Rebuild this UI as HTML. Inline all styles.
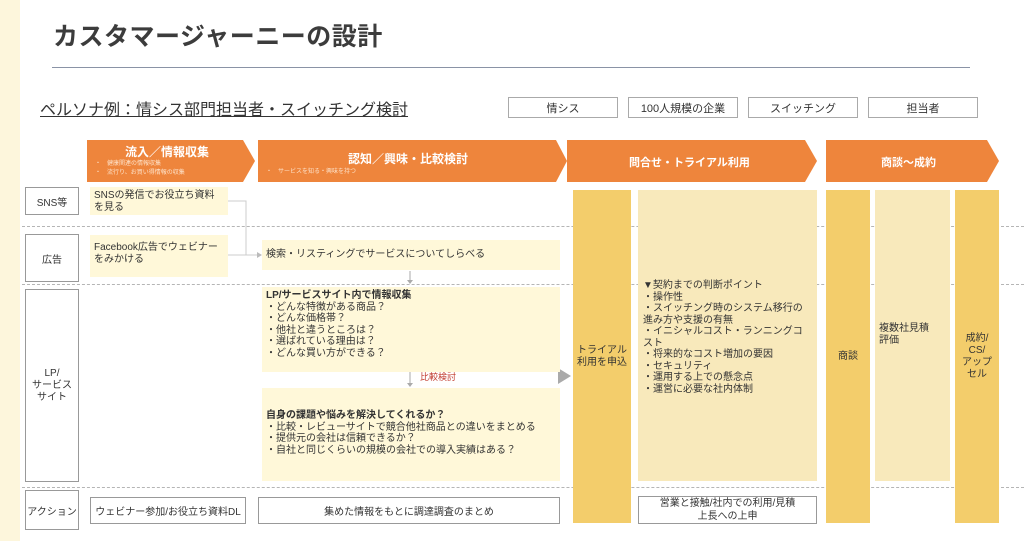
<!DOCTYPE html>
<html><head><meta charset="utf-8"><style>
*{margin:0;padding:0;box-sizing:border-box}
body{width:1024px;height:541px;background:#fff;position:relative;overflow:hidden;font-family:"Liberation Sans","Noto Sans CJK JP",sans-serif;color:#333}
.a{position:absolute}
.strip{left:0;top:0;width:20px;height:541px;background:#fdf6dc}
.title{left:53px;top:17px;font-size:25px;font-weight:600;color:#3c3c3c;letter-spacing:0.5px}
.hr{left:52px;top:67px;width:918px;height:1px;background:#8a93a6}
.persona{left:40px;top:96px;font-size:16px;text-decoration:underline;color:#333}
.tag{top:97px;width:110px;height:21px;border:1px solid #aaa;font-size:11px;display:flex;align-items:center;justify-content:center;color:#333}
.lbl{border:1px solid #999;font-size:10px;text-align:center;display:flex;align-items:center;justify-content:center;background:#fff}
.card{background:#fff8d9;font-size:10px;line-height:12px;padding:3px 4px}
.dash{left:22px;width:1002px;height:0;border-top:1px dashed #b5b5b5}
.col{background:#f3cd6b;font-size:10px;display:flex;align-items:center;justify-content:center;text-align:center;line-height:12px}
.lcol{background:#f8e9bb;font-size:10px;line-height:11.5px}
.box{border:1px solid #999;background:#fff;font-size:10px;display:flex;align-items:center;justify-content:center;text-align:center}
</style></head><body>
<div class="a strip"></div>
<div class="a title">カスタマージャーニーの設計</div>
<div class="a hr"></div>
<div class="a persona">ペルソナ例：情シス部門担当者・スイッチング検討</div>
<div class="a tag" style="left:508px">情シス</div>
<div class="a tag" style="left:628px">100人規模の企業</div>
<div class="a tag" style="left:748px">スイッチング</div>
<div class="a tag" style="left:868px">担当者</div>

<svg class="a" style="left:0;top:0" width="1024" height="541">
<polygon points="87,140 243,140 255,161 243,182 87,182" fill="#ee853c"/>
<polygon points="258,140 556,140 567,161 556,182 258,182" fill="#ee853c"/>
<polygon points="567,140 805,140 817,161 805,182 567,182" fill="#ee853c"/>
<polygon points="826,140 987,140 999,161 987,182 826,182" fill="#ee853c"/>
<polyline points="228,201 246,201 246,255" fill="none" stroke="#ccc"/>
<line x1="228" y1="255" x2="258" y2="255" stroke="#ccc"/>
<polygon points="257,252 262,255 257,258" fill="#bbb"/>
<line x1="410" y1="271" x2="410" y2="281" stroke="#aaa"/>
<polygon points="407,280 413,280 410,284" fill="#aaa"/>
<line x1="410" y1="367" x2="410" y2="384" stroke="#aaa"/>
<polygon points="407,368 413,368 410,364" fill="#aaa"/>
<polygon points="407,383 413,383 410,387" fill="#aaa"/>
<polygon points="558,368 571,376 558,384" fill="#aaa"/>
</svg>
<div class="a" style="left:87px;top:143px;width:160px;text-align:center;color:#fff;font-size:12px;font-weight:bold">流入／情報収集</div>
<div class="a" style="left:95px;top:160px;color:#fde1c8;font-size:6px;line-height:9px">・　健康関連の情報収集<br>・　流行り、お買い得情報の収集</div>
<div class="a" style="left:258px;top:150px;width:300px;text-align:center;color:#fff;font-size:12px;font-weight:bold">認知／興味・比較検討</div>
<div class="a" style="left:266px;top:166px;color:#fde1c8;font-size:6px">・　サービスを知る・興味を持つ</div>
<div class="a" style="left:567px;top:154px;width:245px;text-align:center;color:#fff;font-size:11px;font-weight:bold">問合せ・トライアル利用</div>
<div class="a" style="left:826px;top:154px;width:165px;text-align:center;color:#fff;font-size:11px;font-weight:bold">商談〜成約</div>

<div class="a dash" style="top:226px"></div>
<div class="a dash" style="top:284px"></div>
<div class="a dash" style="top:487px"></div>

<div class="a lbl" style="left:25px;top:187px;width:54px;height:28px">SNS等</div>
<div class="a lbl" style="left:25px;top:234px;width:54px;height:48px">広告</div>
<div class="a lbl" style="left:25px;top:289px;width:54px;height:193px;line-height:12px">LP/<br>サービス<br>サイト</div>
<div class="a lbl" style="left:25px;top:490px;width:54px;height:40px">アクション</div>

<div class="a card" style="left:90px;top:187px;width:138px;height:28px">SNSの発信でお役立ち資料を見る</div>
<div class="a card" style="left:90px;top:235px;width:138px;height:42px;padding-top:7px">Facebook広告でウェビナーをみかける</div>
<div class="a card" style="left:262px;top:240px;width:298px;height:30px;padding-top:9px">検索・リスティングでサービスについてしらべる</div>
<div class="a card" style="left:262px;top:287px;width:298px;height:85px;line-height:11.5px"><b>LP/サービスサイト内で情報収集</b><br>・どんな特徴がある商品？<br>・どんな価格帯？<br>・他社と違うところは？<br>・選ばれている理由は？<br>・どんな買い方ができる？</div>
<div class="a" style="left:420px;top:370px;font-size:9px;color:#c0392b">比較検討</div>
<div class="a card" style="left:262px;top:388px;width:298px;height:93px;padding-top:22px;line-height:11.5px"><b>自身の課題や悩みを解決してくれるか？</b><br>・比較・レビューサイトで競合他社商品との違いをまとめる<br>・提供元の会社は信頼できるか？<br>・自社と同じくらいの規模の会社での導入実績はある？</div>

<div class="a col" style="left:573px;top:190px;width:58px;height:333px">トライアル<br>利用を申込</div>
<div class="a lcol" style="left:638px;top:190px;width:179px;height:291px;padding:90px 5px 0 5px">▼契約までの判断ポイント<br>・操作性<br>・スイッチング時のシステム移行の進み方や支援の有無<br>・イニシャルコスト・ランニングコスト<br>・将来的なコスト増加の要因<br>・セキュリティ<br>・運用する上での懸念点<br>・運営に必要な社内体制</div>
<div class="a col" style="left:826px;top:190px;width:44px;height:333px">商談</div>
<div class="a lcol" style="left:875px;top:190px;width:75px;height:291px;padding:133px 4px 0 4px">複数社見積<br>評価</div>
<div class="a col" style="left:955px;top:190px;width:44px;height:333px">成約/<br>CS/<br>アップ<br>セル</div>

<div class="a box" style="left:90px;top:497px;width:156px;height:27px">ウェビナー参加/お役立ち資料DL</div>
<div class="a box" style="left:258px;top:497px;width:302px;height:27px">集めた情報をもとに調達調査のまとめ</div>
<div class="a box" style="left:638px;top:496px;width:179px;height:28px;line-height:13px">営業と接触/社内での利用/見積<br>上長への上申</div>
</body></html>
